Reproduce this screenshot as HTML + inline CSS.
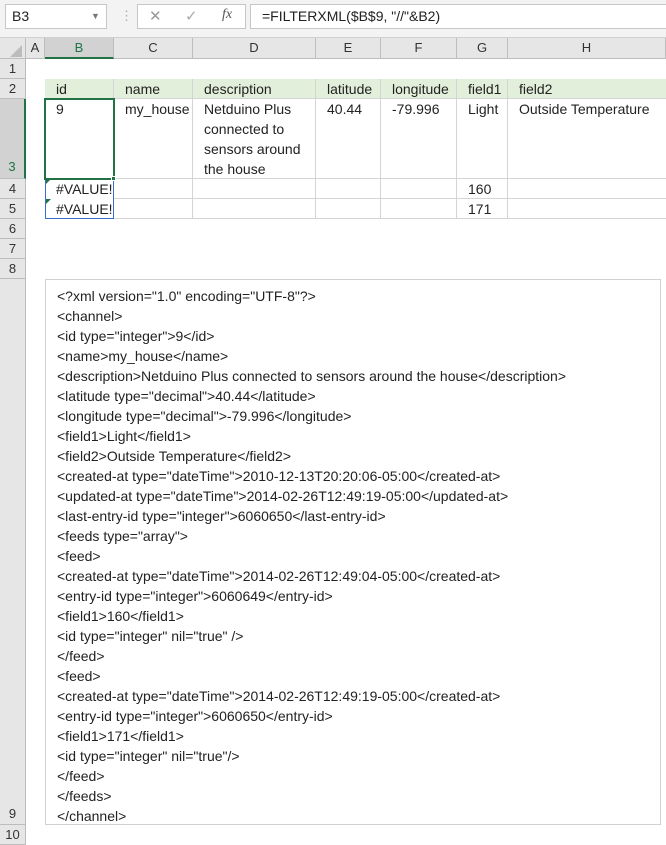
<!DOCTYPE html><html><head><style>
*{margin:0;padding:0;box-sizing:border-box}
html,body{width:666px;height:845px;overflow:hidden}
body{position:relative;background:#fff;font-family:"Liberation Sans",sans-serif;font-size:14px;color:#222}
.a{position:absolute}
.rh{position:absolute;left:0;width:26px;background:#e6e6e6;border-bottom:1px solid #bdbdbd;border-right:1px solid #bdbdbd;text-align:center;font-size:13px;color:#333}
.ch{position:absolute;top:38px;height:21px;background:#e6e6e6;border-right:1px solid #bdbdbd;border-bottom:1px solid #bdbdbd;text-align:center;font-size:13px;line-height:20px;color:#333}
.c{position:absolute;padding-left:11px;line-height:20px;white-space:nowrap}
.gl{position:absolute;background:#d4d4d4}
</style></head><body>
<div class="a" style="left:0;top:0;width:666px;height:38px;background:#f3f3f3;border-bottom:1px solid #d0d0d0"></div>
<div class="a" style="left:5px;top:4px;width:102px;height:25px;background:#fff;border:1px solid #c6c6c6;line-height:23px;padding-left:6px">B3<span class="a" style="left:85px;top:0;font-size:9px;color:#777">▼</span></div>
<div class="a" style="left:120px;top:8px;color:#aaa;font-size:13px">⋮</div>
<div class="a" style="left:137px;top:4px;width:109px;height:25px;background:#fff;border:1px solid #c6c6c6"></div>
<div class="a" style="left:149px;top:7px;color:#999;font-size:15px">✕</div>
<div class="a" style="left:185px;top:7px;color:#aaa;font-size:15px">✓</div>
<div class="a" style="left:222px;top:7px;color:#555;font-style:italic;font-family:'Liberation Serif',serif;font-size:14px">fx</div>
<div class="a" style="left:250px;top:4px;width:416px;height:25px;background:#fff;border:1px solid #c6c6c6;border-right:none;line-height:23px;padding-left:11px">=FILTERXML($B$9, "//"&amp;B2)</div>
<div class="a" style="left:0;top:38px;width:26px;height:21px;background:#e6e6e6;border-right:1px solid #bdbdbd;border-bottom:1px solid #bdbdbd"></div>
<div class="a" style="left:10px;top:45px;width:0;height:0;border-left:12px solid transparent;border-bottom:12px solid #bcbcbc"></div>
<div class="ch" style="left:26px;width:19px">A</div>
<div class="ch" style="left:45px;width:69px;background:#d2d2d2;border-bottom:2px solid #217346;color:#217346">B</div>
<div class="ch" style="left:114px;width:79px">C</div>
<div class="ch" style="left:193px;width:123px">D</div>
<div class="ch" style="left:316px;width:65px">E</div>
<div class="ch" style="left:381px;width:76px">F</div>
<div class="ch" style="left:457px;width:51px">G</div>
<div class="ch" style="left:508px;width:158px">H</div>
<div class="rh" style="top:59px;height:20px;line-height:20px">1</div>
<div class="rh" style="top:79px;height:20px;line-height:20px">2</div>
<div class="rh" style="top:99px;height:80px;line-height:136px;background:#d2d2d2;border-right:2px solid #217346;color:#217346">3</div>
<div class="rh" style="top:179px;height:20px;line-height:20px">4</div>
<div class="rh" style="top:199px;height:20px;line-height:20px">5</div>
<div class="rh" style="top:219px;height:20px;line-height:20px">6</div>
<div class="rh" style="top:239px;height:20px;line-height:20px">7</div>
<div class="rh" style="top:259px;height:20px;line-height:20px">8</div>
<div class="rh" style="top:279px;height:546px;line-height:1070px">9</div>
<div class="rh" style="top:825px;height:20px;line-height:20px">10</div>
<div class="a" style="left:45px;top:79px;width:621px;height:20px;background:#e2efda"></div>
<div class="gl" style="left:45px;top:98px;width:621px;height:1px"></div>
<div class="gl" style="left:45px;top:178px;width:621px;height:1px"></div>
<div class="gl" style="left:45px;top:198px;width:621px;height:1px"></div>
<div class="gl" style="left:45px;top:218px;width:621px;height:1px"></div>
<div class="gl" style="left:113px;top:79px;width:1px;height:140px"></div>
<div class="gl" style="left:192px;top:79px;width:1px;height:140px"></div>
<div class="gl" style="left:315px;top:79px;width:1px;height:140px"></div>
<div class="gl" style="left:380px;top:79px;width:1px;height:140px"></div>
<div class="gl" style="left:456px;top:79px;width:1px;height:140px"></div>
<div class="gl" style="left:507px;top:79px;width:1px;height:140px"></div>
<div class="c" style="left:45px;top:79px">id</div>
<div class="c" style="left:114px;top:79px">name</div>
<div class="c" style="left:193px;top:79px">description</div>
<div class="c" style="left:316px;top:79px">latitude</div>
<div class="c" style="left:381px;top:79px">longitude</div>
<div class="c" style="left:457px;top:79px">field1</div>
<div class="c" style="left:508px;top:79px">field2</div>
<div class="c" style="left:45px;top:99px">9</div>
<div class="c" style="left:114px;top:99px">my_house</div>
<div class="c" style="left:193px;top:99px;white-space:normal;width:116px">Netduino Plus connected to sensors around the house</div>
<div class="c" style="left:316px;top:99px">40.44</div>
<div class="c" style="left:381px;top:99px">-79.996</div>
<div class="c" style="left:457px;top:99px">Light</div>
<div class="c" style="left:508px;top:99px">Outside Temperature</div>
<div class="c" style="left:457px;top:179px">160</div>
<div class="c" style="left:457px;top:199px">171</div>
<div class="a" style="left:45px;top:178px;width:69px;height:41px;border:1px solid #3a6fc9;background:#fff"></div>
<div class="c" style="left:45px;top:179px">#VALUE!</div>
<div class="c" style="left:45px;top:199px">#VALUE!</div>
<div class="a" style="left:46px;top:179px;border-right:5px solid transparent;border-top:5px solid #217346"></div>
<div class="a" style="left:46px;top:199px;border-right:5px solid transparent;border-top:5px solid #217346"></div>
<div class="a" style="left:44px;top:98px;width:71px;height:82px;border:2px solid #217346"></div>
<div class="a" style="left:111px;top:176px;width:5px;height:5px;background:#217346;border:1px solid #fff"></div>
<div class="a" style="left:45px;top:279px;width:616px;height:546px;border:1px solid #d0d0d0;padding:6px 0 0 11px;line-height:20px;white-space:pre">&lt;?xml version="1.0" encoding="UTF-8"?&gt;
&lt;channel&gt;
&lt;id type="integer"&gt;9&lt;/id&gt;
&lt;name&gt;my_house&lt;/name&gt;
&lt;description&gt;Netduino Plus connected to sensors around the house&lt;/description&gt;
&lt;latitude type="decimal"&gt;40.44&lt;/latitude&gt;
&lt;longitude type="decimal"&gt;-79.996&lt;/longitude&gt;
&lt;field1&gt;Light&lt;/field1&gt;
&lt;field2&gt;Outside Temperature&lt;/field2&gt;
&lt;created-at type="dateTime"&gt;2010-12-13T20:20:06-05:00&lt;/created-at&gt;
&lt;updated-at type="dateTime"&gt;2014-02-26T12:49:19-05:00&lt;/updated-at&gt;
&lt;last-entry-id type="integer"&gt;6060650&lt;/last-entry-id&gt;
&lt;feeds type="array"&gt;
&lt;feed&gt;
&lt;created-at type="dateTime"&gt;2014-02-26T12:49:04-05:00&lt;/created-at&gt;
&lt;entry-id type="integer"&gt;6060649&lt;/entry-id&gt;
&lt;field1&gt;160&lt;/field1&gt;
&lt;id type="integer" nil="true" /&gt;
&lt;/feed&gt;
&lt;feed&gt;
&lt;created-at type="dateTime"&gt;2014-02-26T12:49:19-05:00&lt;/created-at&gt;
&lt;entry-id type="integer"&gt;6060650&lt;/entry-id&gt;
&lt;field1&gt;171&lt;/field1&gt;
&lt;id type="integer" nil="true"/&gt;
&lt;/feed&gt;
&lt;/feeds&gt;
&lt;/channel&gt;</div>
</body></html>
